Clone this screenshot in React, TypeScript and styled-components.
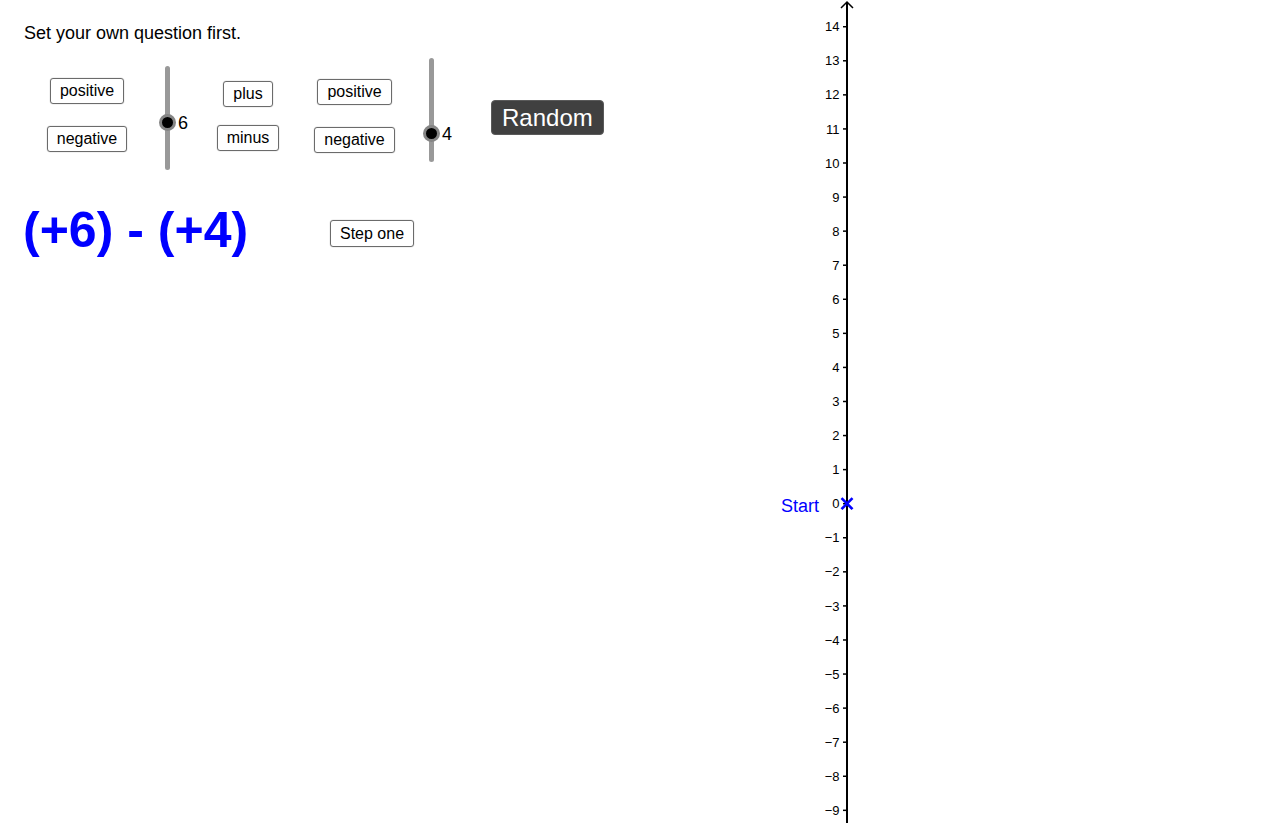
import { useState } from "react";
import styled, { createGlobalStyle } from "styled-components";

const GlobalStyle = createGlobalStyle`
  html, body {
    margin: 0;
    padding: 0;
    background: #ffffff;
  }
  body {
    font-family: "Liberation Sans", Arial, sans-serif;
    color: #000;
  }
`;

const Page = styled.div`
  display: flex;
  width: 1280px;
  height: 823px;
  overflow: hidden;
  background: #fff;
`;

const Panel = styled.div`
  flex: 0 0 760px;
  display: flex;
  flex-direction: column;
`;

const Title = styled.div`
  margin: 23px 0 0 24px;
  font-size: 18px;
  line-height: 21px;
`;

const Controls = styled.div`
  display: flex;
  align-items: flex-start;
  margin-top: 12px;
  height: 114px;
`;

const Column = styled.div<{ $left: number; $top: number; $gap: number; $width: number }>`
  display: flex;
  flex-direction: column;
  align-items: center;
  width: ${(p) => p.$width}px;
  margin-left: ${(p) => p.$left}px;
  margin-top: ${(p) => p.$top}px;
  gap: ${(p) => p.$gap}px;
`;

const Btn = styled.button`
  height: 26px;
  padding: 0 9px;
  background: #fff;
  border: 1px solid #6b6b6b;
  border-radius: 3px;
  font-family: "Liberation Sans", Arial, sans-serif;
  font-size: 16px;
  line-height: 24px;
  color: #000;
  box-shadow: 0 0 0 0.5px rgba(0, 0, 0, 0.1);
  cursor: pointer;
  white-space: nowrap;
`;

const SliderBox = styled.div<{ $left: number; $top: number }>`
  position: relative;
  flex: 0 0 24px;
  height: 104px;
  margin-left: ${(p) => p.$left}px;
  margin-top: ${(p) => p.$top}px;
`;

const Track = styled.div`
  position: absolute;
  left: 9.5px;
  top: 0;
  bottom: 0;
  width: 5px;
  border-radius: 3px;
  background: #999999;
`;

const Knob = styled.div`
  position: absolute;
  left: 3.5px;
  width: 17px;
  height: 17px;
  box-sizing: border-box;
  border-radius: 50%;
  background: #000;
  border: 3px solid #858585;
`;

const SliderValue = styled.span`
  position: absolute;
  left: 23px;
  font-size: 18px;
  line-height: 20px;
`;

const RandomBtn = styled.button<{ $left: number; $top: number }>`
  height: 35px;
  margin-left: ${(p) => p.$left}px;
  margin-top: ${(p) => p.$top}px;
  padding: 0 10px;
  background: #404040;
  border: 1px solid #5a5a5a;
  border-radius: 4px;
  color: #fff;
  font-family: "Liberation Sans", Arial, sans-serif;
  font-size: 24px;
  line-height: 33px;
  cursor: pointer;
`;

const ExpressionRow = styled.div`
  display: flex;
  align-items: flex-start;
  margin-top: 32px;
`;

const Expression = styled.div`
  margin-left: 23px;
  width: 225px;
  font-size: 50px;
  line-height: 56px;
  font-weight: bold;
  color: #0000ff;
  white-space: nowrap;
`;

const StepBtn = styled(Btn)`
  margin-left: 82px;
  margin-top: 18px;
  height: 27px;
`;

const AxisSvg = styled.svg`
  flex: 0 0 140px;
  display: block;
  font-family: "Liberation Sans", Arial, sans-serif;
`;

const MIN = 1;
const MAX = 12;

function Slider({ value, left, top }: { value: number; left: number; top: number }) {
  const y = 104 * (1 - (value - MIN) / (MAX - MIN));
  return (
    <SliderBox $left={left} $top={top}>
      <Track />
      <Knob style={{ top: y - 8.5 }} />
      <SliderValue style={{ top: y - 10 }}>{value}</SliderValue>
    </SliderBox>
  );
}

const AXIS_X = 87;
const ZERO_Y = 503.7;
const UNIT = 34.07;

function NumberLine() {
  const ticks: number[] = [];
  for (let v = 14; v >= -9; v--) ticks.push(v);
  return (
    <AxisSvg width="140" height="823" viewBox="0 0 140 823">
      <line x1={AXIS_X} y1={2} x2={AXIS_X} y2={823} stroke="#000" strokeWidth={2} />
      <polyline
        points={`${AXIS_X - 6},8 ${AXIS_X},2 ${AXIS_X + 6},8`}
        fill="none"
        stroke="#000"
        strokeWidth={1.5}
      />
      {ticks.map((v) => {
        const y = ZERO_Y - v * UNIT;
        return (
          <g key={v}>
            <line x1={AXIS_X - 4} y1={y} x2={AXIS_X} y2={y} stroke="#000" strokeWidth={1.5} />
            <text x={AXIS_X - 7.5} y={y + 4.6} fontSize="13" textAnchor="end" fill="#000">
              {v < 0 ? `\u2212${-v}` : v}
            </text>
          </g>
        );
      })}
      <g stroke="#0000ff" strokeWidth={2.6} strokeLinecap="butt">
        <line x1={AXIS_X - 5.5} y1={ZERO_Y - 5.5} x2={AXIS_X + 5.5} y2={ZERO_Y + 5.5} />
        <line x1={AXIS_X - 5.5} y1={ZERO_Y + 5.5} x2={AXIS_X + 5.5} y2={ZERO_Y - 5.5} />
      </g>
      <text x={59} y={ZERO_Y + 8} fontSize="18" textAnchor="end" fill="#0000ff">
        Start
      </text>
    </AxisSvg>
  );
}

export default function App() {
  const [first, setFirst] = useState(6);
  const [second, setSecond] = useState(4);
  const [firstSign, setFirstSign] = useState("+");
  const [op, setOp] = useState("-");
  const [secondSign, setSecondSign] = useState("+");

  const randomize = () => {
    const r = () => MIN + Math.floor(Math.random() * (MAX - MIN + 1));
    setFirst(r());
    setSecond(r());
    setFirstSign(Math.random() < 0.5 ? "+" : "-");
    setSecondSign(Math.random() < 0.5 ? "+" : "-");
    setOp(Math.random() < 0.5 ? "+" : "-");
  };

  return (
    <>
      <GlobalStyle />
      <Page>
        <Panel>
          <Title>Set your own question first.</Title>
          <Controls>
            <Column $left={47} $top={22} $gap={22} $width={80}>
              <Btn onClick={() => setFirstSign("+")}>positive</Btn>
              <Btn onClick={() => setFirstSign("-")}>negative</Btn>
            </Column>
            <Slider value={first} left={28} top={10} />
            <Column $left={38} $top={25} $gap={18} $width={62}>
              <Btn onClick={() => setOp("+")}>plus</Btn>
              <Btn onClick={() => setOp("-")}>minus</Btn>
            </Column>
            <Column $left={36} $top={23} $gap={22} $width={79}>
              <Btn onClick={() => setSecondSign("+")}>positive</Btn>
              <Btn onClick={() => setSecondSign("-")}>negative</Btn>
            </Column>
            <Slider value={second} left={25} top={2} />
            <RandomBtn $left={48} $top={44} onClick={randomize}>
              Random
            </RandomBtn>
          </Controls>
          <ExpressionRow>
            <Expression>
              ({firstSign}
              {first}) {op} ({secondSign}
              {second})
            </Expression>
            <StepBtn>Step one</StepBtn>
          </ExpressionRow>
        </Panel>
        <NumberLine />
      </Page>
    </>
  );
}
